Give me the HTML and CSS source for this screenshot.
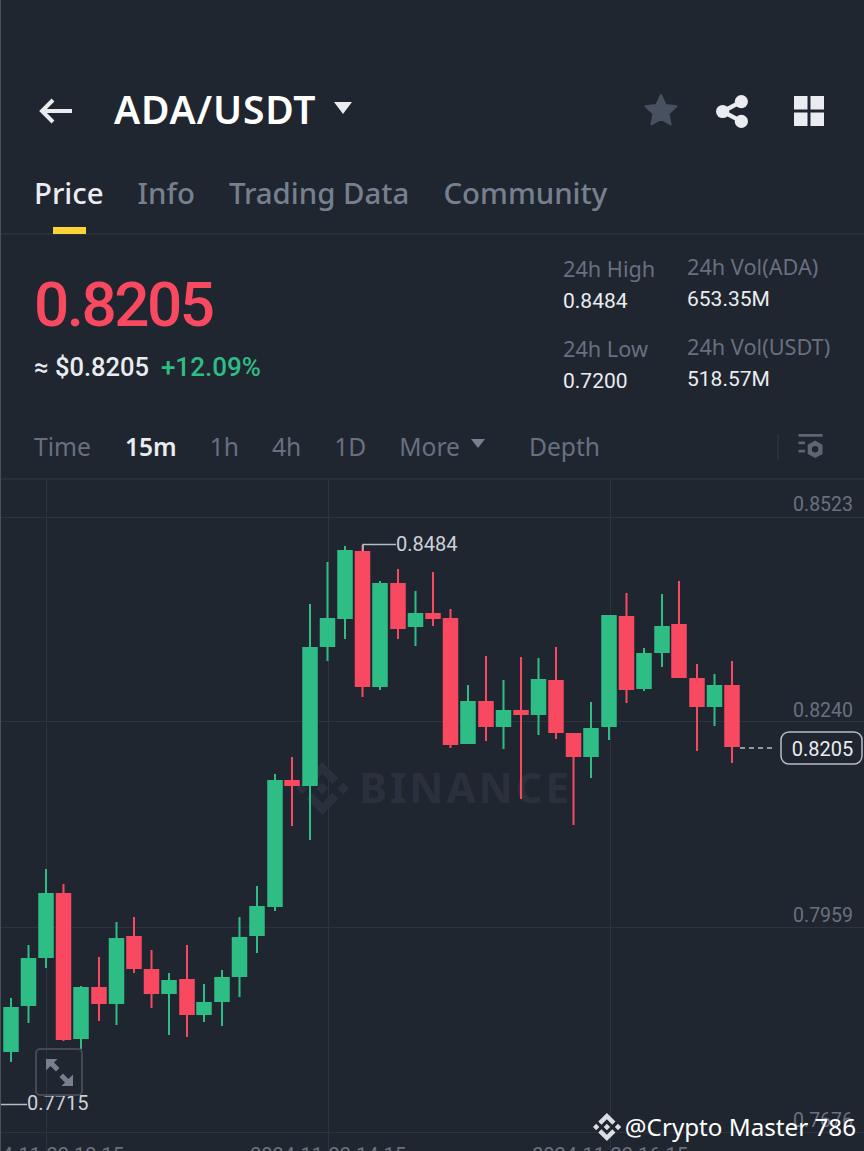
FILE: index.html

```html
<!DOCTYPE html>
<html lang="en">
<head>
<meta charset="UTF-8" />
<meta name="viewport" content="width=device-width, initial-scale=1" />
<title>ADA/USDT</title>
<link rel="stylesheet" href="styles.css">
</head>
<body>
  <div class="screen">
    <header class="topbar">
      <svg class="back-icon" viewBox="0 0 34 28"><path d="M33 14H3M14 3L3 14l11 11" /></svg>
      <div class="pair">ADA/USDT</div>
      <svg class="caret-icon" viewBox="0 0 22 16"><path d="M2 2h18l-9 12z" /></svg>
      <div class="topbar-actions">
        <svg class="star-icon" viewBox="0 0 36 36"><path d="M18 3l4.600 10 10.900 1.300-8 7.400 2.100 10.800L18 27l-9.600 5.500 2.100-10.800-8-7.400L13.400 13z" /></svg>
        <svg class="share-icon" viewBox="2 2 29 30"><path class="share-lines" d="M25 8L8 17l17 9" /><circle cx="25" cy="8" r="6" /><circle cx="8" cy="17" r="6" /><circle cx="25" cy="26" r="6" /></svg>
        <svg class="grid-icon" viewBox="0 0 30 30"><path d="M0 0h13.500v13.500H0zM16.500 0H30v13.500H16.500zM0 16.500h13.500V30H0zM16.500 16.500H30V30H16.500z" /></svg>
      </div>
    </header>

    <nav class="tabs">
      <div class="tab active">Price</div>
      <div class="tab">Info</div>
      <div class="tab">Trading Data</div>
      <div class="tab">Community</div>
    </nav>

    <section class="stats">
      <div class="price-box">
        <div class="last-price">0.8205</div>
        <div class="price-sub"><span class="usd">≈ $0.8205</span><span class="change">+12.09%</span></div>
      </div>
      <div class="stat-col stat-col-left">
        <div class="stat"><div class="stat-label">24h High</div><div class="stat-value">0.8484</div></div>
        <div class="stat"><div class="stat-label">24h Low</div><div class="stat-value">0.7200</div></div>
      </div>
      <div class="stat-col">
        <div class="stat"><div class="stat-label">24h Vol(ADA)</div><div class="stat-value">653.35M</div></div>
        <div class="stat"><div class="stat-label">24h Vol(USDT)</div><div class="stat-value">518.57M</div></div>
      </div>
    </section>

    <div class="intervals">
      <div class="interval">Time</div>
      <div class="interval active">15m</div>
      <div class="interval">1h</div>
      <div class="interval">4h</div>
      <div class="interval">1D</div>
      <div class="interval">More<svg class="more-caret" viewBox="0 0 14 10"><path d="M0 0h14L7 9z" /></svg></div>
      <div class="interval depth">Depth</div>
      <div class="intervals-sep"></div>
      <svg class="settings-icon" viewBox="0 0 26 27"><path d="M0 0h26v3H0zM0 8h7v3H0zM0 17h7v3H0z" /><path fill-rule="evenodd" d="M18 7l8 4.500v10L18 26l-8-4.500v-10zM18 13a3.500 3.500 0 1 0 0 7 3.500 3.500 0 0 0 0-7z" /></svg>
    </div>

    <div class="chart">
      <svg id="chart-svg" class="chart-svg" width="864" height="671" viewBox="0 480 864 671">
        <g class="grid">
          <path d="M0 517.500H864M0 721.500H864M0 927.500H864M0 1132.500H864M46.500 480V1151M328.500 480V1151M610.500 480V1151" />
        </g>
        <svg class="wm-logo" x="296" y="762" width="53" height="53" viewBox="0 0 126.610 126.610"><path d="M38.171 53.203l24.588-24.587 24.601 24.600 14.307-14.307L62.759 0 23.864 38.896zM0 63.326l14.307-14.307 14.306 14.307-14.306 14.306zm38.171 10.121l24.588 24.587 24.600-24.600 14.315 14.300-38.915 38.916-38.896-38.895-.020-.020zm60.437-10.121l14.307-14.307 14.306 14.307-14.306 14.306zM77.270 63.319L62.760 77.842 48.240 63.324l14.519-14.519z" /></svg>
        <text class="watermark" x="359" y="803">BINANCE</text>
        <g id="candles"></g>
        <g class="axis">
          <text x="853" y="511">0.8523</text>
          <text x="853" y="717">0.8240</text>
          <text x="853" y="922">0.7959</text>
          <text x="853" y="1127">0.7676</text>
        </g>
        <g class="time-axis">
          <text x="46" y="1162">2024-11-22 12:15</text>
          <text x="328" y="1162">2024-11-22 14:15</text>
          <text x="610" y="1162">2024-11-22 16:15</text>
        </g>
        <path class="marker-line" d="M363 551v-6.500h33M0 1104.500h27" />
        <text class="marker" x="396" y="551">0.8484</text>
        <text class="marker" x="27" y="1110">0.7715</text>
        <path class="last-dash" d="M740 748h32" />
        <rect class="last-box" x="781" y="732" width="81" height="32" rx="8" />
        <text class="last-text" x="822.500" y="756">0.8205</text>
      </svg>
      <div class="expand-btn">
        <svg viewBox="0 0 28 28"><path d="M0 0h12L8.300 3.700 14 9.400 10.400 13 4.700 7.300 0 12zM28 28H16l3.700-3.700L14 18.600l3.600-3.600 5.700 5.700L28 16z" /></svg>
      </div>
      <div class="credit">
        <svg class="credit-logo" viewBox="0 0 126.610 126.610"><path d="M38.171 53.203l24.588-24.587 24.601 24.600 14.307-14.307L62.759 0 23.864 38.896zM0 63.326l14.307-14.307 14.306 14.307-14.306 14.306zm38.171 10.121l24.588 24.587 24.600-24.600 14.315 14.300-38.915 38.916-38.896-38.895-.020-.020zm60.437-10.121l14.307-14.307 14.306 14.307-14.306 14.306zM77.270 63.319L62.760 77.842 48.240 63.324l14.519-14.519z" /></svg>
        <span>@Crypto Master 786</span>
      </div>
    </div>
  </div>

<script src="script.js"></script>
</body>
</html>
```

FILE: styles.css

```css
* {
  box-sizing: border-box;
}
html, body {
  margin: 0;
  height: 100%;
  overflow: hidden;
}
body {
  background: #1f2630;
  font-family: "Noto Sans", sans-serif;
  color: #eaecef;
}
.screen {
  height: 1151px;
  overflow: hidden;
  border-left: 1px solid #4a4f5b;
  display: flex;
  flex-direction: column;
}
.topbar {
  display: flex;
  align-items: center;
  height: 50px;
  margin-top: 86px;
  padding-left: 38px;
}
.back-icon {
  width: 34px;
  height: 28px;
  fill: none;
  stroke: #eaecef;
  stroke-width: 4;
}
.pair {
  margin-left: 41px;
  font-size: 39px;
  font-weight: 600;
  color: #fff;
  letter-spacing: 0.8px;
  line-height: 50px;
  margin-top: -4px;
}
.caret-icon {
  width: 22px;
  height: 16px;
  margin: 0 0 6px 16px;
  fill: #eaecef;
}
.topbar-actions {
  margin-left: auto;
  margin-right: 40px;
  display: flex;
  align-items: center;
}
.star-icon {
  width: 36px;
  height: 36px;
  fill: #47515f;
  stroke: #47515f;
  stroke-width: 2;
  stroke-linejoin: round;
  margin-top: -2px;
}
.share-icon {
  width: 32px;
  height: 33px;
  margin-left: 37px;
  fill: #eaecef;
}
.share-lines {
  fill: none;
  stroke: #eaecef;
  stroke-width: 4;
}
.grid-icon {
  width: 30px;
  height: 30px;
  margin-left: 46px;
  fill: #eaecef;
}
.tabs {
  display: flex;
  gap: 34px;
  height: 99px;
  padding: 37px 0 0 33px;
  border-bottom: 2px solid #2a303b;
}
.tab {
  position: relative;
  font-size: 29.400px;
  font-weight: 500;
  line-height: 40px;
  color: #76808f;
}
.tab.active {
  color: #eaecef;
}
.tab.active::after {
  content: "";
  position: absolute;
  left: 19px;
  top: 54px;
  width: 33px;
  height: 7px;
  background: #fcd535;
}
.stats {
  display: flex;
  height: 186px;
  padding: 16px 0 0 33px;
}
.price-box {
  width: 529px;
}
.last-price {
  font-family: Roboto, sans-serif;
  font-size: 62px;
  font-weight: 500;
  line-height: 70px;
  letter-spacing: -2.500px;
  color: #f84960;
  margin-top: 19px;
}
.price-sub {
  display: flex;
  gap: 12px;
  margin-top: 9px;
  font-family: Roboto, sans-serif;
  font-size: 25.500px;
  font-weight: 500;
  line-height: 36px;
}
.change {
  font-size: 26px;
  color: #2ebd85;
}
.stat-col {
  display: flex;
  flex-direction: column;
  gap: 17px;
}
.stat-col-left {
  width: 124px;
  padding-top: 2px;
}
.stat-label {
  font-size: 21.700px;
  line-height: 32px;
  margin-bottom: 1px;
  color: #687080;
}
.stat-value {
  font-family: Roboto, sans-serif;
  font-size: 21px;
  line-height: 30px;
  color: #eaecef;
}
.intervals {
  display: flex;
  align-items: center;
  height: 59px;
  padding: 0 0 6px 33px;
  gap: 33px;
  border-bottom: 2px solid #2a303b;
}
.interval {
  display: flex;
  align-items: center;
  font-size: 24.600px;
  color: #687080;
}
.interval.active {
  margin-left: 1px;
  font-weight: 600;
  color: #eaecef;
}
.interval.depth {
  margin-left: 11px;
}
.more-caret {
  width: 14px;
  height: 10px;
  margin: 0 0 5px 11px;
  fill: #76808f;
}
.intervals-sep {
  width: 2px;
  height: 26px;
  margin-left: auto;
  background: #2a303b;
}
.settings-icon {
  width: 25px;
  height: 25px;
  margin-left: -14px;
  margin-right: 41px;
  fill: #5e6673;
}
.chart {
  position: relative;
  margin-left: -1px;
  flex: 1;
}
.chart-svg {
  position: absolute;
  left: 0;
  top: 0;
  display: block;
}
.grid path {
  fill: none;
  stroke: #2d333f;
  stroke-width: 1;
}
.watermark {
  font-family: "Noto Sans", sans-serif;
  font-size: 42px;
  font-weight: 700;
  letter-spacing: 3px;
  fill: #2b313c;
}
.wm-logo {
  fill: #2b313c;
}
.axis text {
  font-family: Roboto, sans-serif;
  font-size: 19.500px;
  text-anchor: end;
  fill: #6a717d;
}
.time-axis text {
  font-family: Roboto, sans-serif;
  font-size: 20px;
  text-anchor: middle;
  fill: #6a717d;
}
.marker-line {
  fill: none;
  stroke: #b7bdc6;
  stroke-width: 1.500;
}
.marker {
  font-family: Roboto, sans-serif;
  font-size: 20px;
  fill: #cdd1d8;
}
.last-dash {
  stroke: #b7bdc6;
  stroke-width: 1.500;
  stroke-dasharray: 5 4;
}
.last-box {
  fill: #1f2630;
  stroke: #b7bdc6;
  stroke-width: 1.500;
}
.last-text {
  font-family: Roboto, sans-serif;
  font-size: 20px;
  text-anchor: middle;
  fill: #eaecef;
}
.expand-btn {
  position: absolute;
  left: 35px;
  top: 568px;
  width: 48px;
  height: 48px;
  border: 2px solid #434a56;
  border-radius: 5px;
  display: flex;
  align-items: center;
  justify-content: center;
}
.expand-btn svg {
  width: 27px;
  height: 27px;
  fill: #76808f;
}
.credit {
  position: absolute;
  right: 8px;
  top: 629px;
  display: flex;
  align-items: center;
  gap: 4px;
  font-size: 24.200px;
  line-height: 36px;
  color: #fff;
}
.credit-logo {
  width: 28px;
  height: 28px;
  fill: #dcdee2;
}
```

FILE: script.js

```js
// x, wick top, wick bottom, body top, body bottom, up?
const candles = [
  [11, 998, 1062, 1007, 1052, 1],
  [28.5, 945, 1023, 958, 1006, 1],
  [46, 869, 968, 893, 958, 1],
  [63.5, 884, 1041, 893, 1040, 0],
  [81, 986, 1049, 987, 1039, 1],
  [99, 957, 1021, 987, 1004, 0],
  [116.5, 922, 1025, 938, 1004, 1],
  [134, 917, 973, 936, 969, 0],
  [151.5, 950, 1008, 969, 994, 0],
  [169, 973, 1035, 980, 994, 1],
  [187, 945, 1037, 979, 1015, 0],
  [204, 984, 1022, 1002, 1015, 1],
  [222, 970, 1026, 977, 1002, 1],
  [239.5, 917, 997, 937, 977, 1],
  [257, 886, 953, 906, 936, 1],
  [275, 774, 911, 780, 907, 1],
  [292, 757, 826, 780, 786, 0],
  [310, 604, 840, 647, 786, 1],
  [327.5, 562, 661, 618, 647, 1],
  [345, 546, 639, 550, 619, 1],
  [362.5, 545, 697, 551, 687, 0],
  [380, 581, 690, 583, 687, 1],
  [398, 569, 639, 583, 629, 0],
  [415.5, 591, 646, 613, 627, 1],
  [433, 572, 626, 613, 619, 0],
  [450.5, 609, 748, 618, 745, 0],
  [468, 685, 744, 701, 744, 1],
  [486, 656, 741, 701, 727, 0],
  [503.5, 680, 749, 710, 727, 1],
  [521, 657, 799, 710, 715, 0],
  [538.5, 658, 735, 679, 715, 1],
  [556, 647, 739, 680, 733, 0],
  [573.5, 733, 825, 733, 757, 0],
  [591, 702, 778, 728, 757, 1],
  [609, 615, 740, 615, 727, 1],
  [626.5, 593, 703, 616, 690, 0],
  [644, 648, 691, 653, 689, 1],
  [662, 594, 667, 626, 653, 1],
  [679, 581, 678, 624, 678, 0],
  [697, 664, 751, 678, 707, 0],
  [714.5, 674, 726, 685, 707, 1],
  [732, 661, 763, 685, 747, 0]
];

const NS = "http://www.w3.org/2000/svg";
const group = document.getElementById("candles");

function addRect(x, y, w, h, color) {
  const r = document.createElementNS(NS, "rect");
  r.setAttribute("x", x);
  r.setAttribute("y", y);
  r.setAttribute("width", w);
  r.setAttribute("height", h);
  r.setAttribute("fill", color);
  group.appendChild(r);
}

candles.forEach(c => {
  const color = c[5] ? "#2ebd85" : "#f84960";
  addRect(c[0] - 1, c[1], 2, c[2] - c[1], color);
  addRect(c[0] - 7.75, c[3], 15.5, c[4] - c[3], color);
});

// candle cut off by the left edge
addRect(0, 1053, 1, 32, "#2ebd85");
```
